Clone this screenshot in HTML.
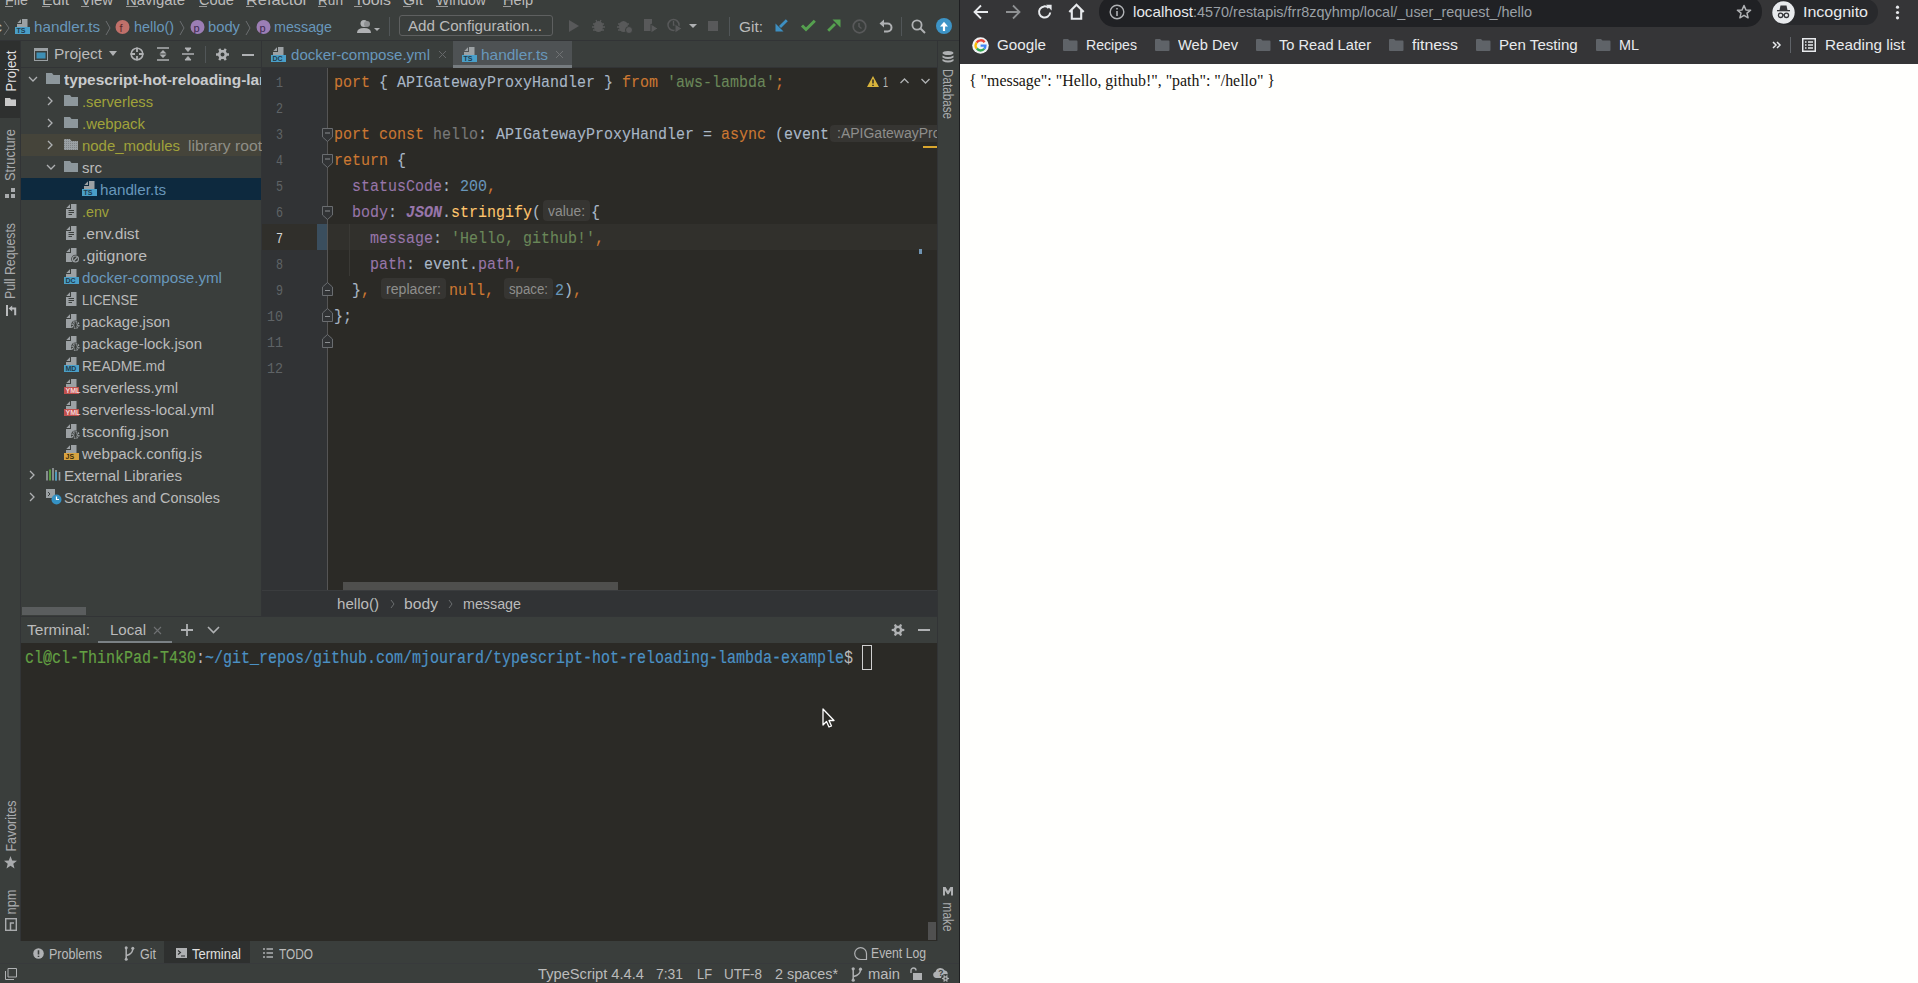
<!DOCTYPE html>
<html><head><meta charset="utf-8"><style>
html,body{margin:0;padding:0;width:1918px;height:983px;overflow:hidden;background:#3a3e3c;}
body>div,body>span,body>svg{position:absolute;}
svg{overflow:visible}
</style></head><body>
<div style="left:0px;top:0px;width:960px;height:983px;background:#3a3e3c;"></div>
<div style="left:0px;top:40px;width:959px;height:1px;background:#323436;"></div>
<span style="left:5px;top:-9px;font:normal normal 15px/17px 'Liberation Sans';color:#bbbbbb;white-space:pre;transform:scaleX(0.9516);transform-origin:0 0;">File</span>
<div style="left:5px;top:6px;width:8px;height:1px;background:#9a9a9a;"></div>
<span style="left:42px;top:-9px;font:normal normal 15px/17px 'Liberation Sans';color:#bbbbbb;white-space:pre;transform:scaleX(1.0446);transform-origin:0 0;">Edit</span>
<div style="left:42px;top:6px;width:8px;height:1px;background:#9a9a9a;"></div>
<span style="left:81px;top:-9px;font:normal normal 15px/17px 'Liberation Sans';color:#bbbbbb;white-space:pre;transform:scaleX(0.9925);transform-origin:0 0;">View</span>
<div style="left:81px;top:6px;width:8px;height:1px;background:#9a9a9a;"></div>
<span style="left:126px;top:-9px;font:normal normal 15px/17px 'Liberation Sans';color:#bbbbbb;white-space:pre;transform:scaleX(0.9966);transform-origin:0 0;">Navigate</span>
<div style="left:126px;top:6px;width:12px;height:1px;background:#9a9a9a;"></div>
<span style="left:199px;top:-9px;font:normal normal 15px/17px 'Liberation Sans';color:#bbbbbb;white-space:pre;transform:scaleX(0.9760);transform-origin:0 0;">Code</span>
<div style="left:199px;top:6px;width:8px;height:1px;background:#9a9a9a;"></div>
<span style="left:246px;top:-9px;font:normal normal 15px/17px 'Liberation Sans';color:#bbbbbb;white-space:pre;transform:scaleX(1.0937);transform-origin:0 0;">Refactor</span>
<div style="left:246px;top:6px;width:8px;height:1px;background:#9a9a9a;"></div>
<span style="left:318px;top:-9px;font:normal normal 15px/17px 'Liberation Sans';color:#bbbbbb;white-space:pre;transform:scaleX(0.9085);transform-origin:0 0;">Run</span>
<div style="left:318px;top:6px;width:8px;height:1px;background:#9a9a9a;"></div>
<span style="left:354px;top:-9px;font:normal normal 15px/17px 'Liberation Sans';color:#bbbbbb;white-space:pre;transform:scaleX(1.0566);transform-origin:0 0;">Tools</span>
<div style="left:354px;top:6px;width:8px;height:1px;background:#9a9a9a;"></div>
<span style="left:403px;top:-9px;font:normal normal 15px/17px 'Liberation Sans';color:#bbbbbb;white-space:pre;transform:scaleX(1.0434);transform-origin:0 0;">Git</span>
<div style="left:403px;top:6px;width:8px;height:1px;background:#9a9a9a;"></div>
<span style="left:436px;top:-9px;font:normal normal 15px/17px 'Liberation Sans';color:#bbbbbb;white-space:pre;transform:scaleX(0.9372);transform-origin:0 0;">Window</span>
<div style="left:436px;top:6px;width:12px;height:1px;background:#9a9a9a;"></div>
<span style="left:503px;top:-9px;font:normal normal 15px/17px 'Liberation Sans';color:#bbbbbb;white-space:pre;transform:scaleX(0.9725);transform-origin:0 0;">Help</span>
<div style="left:503px;top:6px;width:8px;height:1px;background:#9a9a9a;"></div>
<span style="left:-6px;top:18px;font:normal normal 15px/17px 'Liberation Sans';color:#bbbbbb;white-space:pre;transform:scaleX(1.0667);transform-origin:0 0;">c</span>
<svg style="left:0px;top:19px;" width="12" height="16" viewBox="0 0 12 16"><path d="M4 2 L9 9 L4 16" stroke="#6b6e70" stroke-width="1" fill="none"/></svg>
<svg style="left:15px;top:19px;" width="16" height="16" viewBox="0 0 16 16"><path d="M2.3 4 L6 0.3 V4 Z" fill="#9ca1a4"/><path d="M7 0 H12.5 V8 H2 V5 H7 Z" fill="#9ca1a4"/><rect x="0" y="8" width="15" height="7" fill="#4a9fc8"/><text x="1.5" y="14.2" font-family="Liberation Sans" font-size="7" font-weight="bold" fill="#1f3b4c">TS</text></svg>
<span style="left:34px;top:18px;font:normal normal 15px/17px 'Liberation Sans';color:#6897bb;white-space:pre;transform:scaleX(1.0147);transform-origin:0 0;">handler.ts</span>
<svg style="left:104px;top:19px;" width="8" height="16" viewBox="0 0 8 16"><path d="M2 2 L6 9 L2 16" stroke="#6b6e70" stroke-width="1" fill="none"/></svg>
<svg style="left:115px;top:19px;" width="16" height="16" viewBox="0 0 16 16"><circle cx="7.5" cy="8" r="7" fill="#c0706a"/><text x="4.5" y="13" font-family="Liberation Sans" font-size="11" fill="#5a2a2a">f</text></svg>
<span style="left:134px;top:18px;font:normal normal 15px/17px 'Liberation Sans';color:#6897bb;white-space:pre;transform:scaleX(0.9596);transform-origin:0 0;">hello()</span>
<svg style="left:178px;top:19px;" width="8" height="16" viewBox="0 0 8 16"><path d="M2 2 L6 9 L2 16" stroke="#6b6e70" stroke-width="1" fill="none"/></svg>
<svg style="left:190px;top:19px;" width="16" height="16" viewBox="0 0 16 16"><circle cx="7.5" cy="8" r="7" fill="#9c7eb5"/><text x="3.5" y="13" font-family="Liberation Sans" font-size="11" fill="#3d2a50">p</text></svg>
<span style="left:208px;top:18px;font:normal normal 15px/17px 'Liberation Sans';color:#6897bb;white-space:pre;transform:scaleX(0.9838);transform-origin:0 0;">body</span>
<svg style="left:244px;top:19px;" width="8" height="16" viewBox="0 0 8 16"><path d="M2 2 L6 9 L2 16" stroke="#6b6e70" stroke-width="1" fill="none"/></svg>
<svg style="left:256px;top:19px;" width="16" height="16" viewBox="0 0 16 16"><circle cx="7.5" cy="8" r="7" fill="#9c7eb5"/><text x="3.5" y="13" font-family="Liberation Sans" font-size="11" fill="#3d2a50">p</text></svg>
<span style="left:274px;top:18px;font:normal normal 15px/17px 'Liberation Sans';color:#6897bb;white-space:pre;transform:scaleX(0.9529);transform-origin:0 0;">message</span>
<svg style="left:356px;top:19px;" width="28" height="16" viewBox="0 0 28 16"><circle cx="8" cy="4.5" r="3.5" fill="#afb1b3"/><path d="M1 14 Q1 9 8 9 Q15 9 15 14 Z" fill="#afb1b3"/><circle cx="11" cy="5" r="3" fill="#8f9193"/><path d="M18 9 H24 L21 12 Z" fill="#afb1b3"/></svg>
<div style="left:389px;top:17px;width:1px;height:19px;background:#515658;"></div>
<div style="left:399px;top:15px;width:154px;height:21px;background:transparent;border:1px solid #5e6060;border-radius:3px;box-sizing:border-box"></div>
<span style="left:408px;top:17px;font:normal normal 15px/17px 'Liberation Sans';color:#bbbbbb;white-space:pre;transform:scaleX(1.0107);transform-origin:0 0;">Add Configuration...</span>
<svg style="left:568px;top:19px;" width="12" height="14" viewBox="0 0 12 14"><path d="M1 1 L11 7 L1 13 Z" fill="#58595a"/></svg>
<svg style="left:592px;top:18px;" width="13" height="15" viewBox="0 0 13 15"><ellipse cx="6.5" cy="8.5" rx="4.5" ry="5.5" fill="#58595a"/><path d="M1 6 H12 M0 9 H13 M1 12 H12 M4 2 L5 4 M9 2 L8 4" stroke="#58595a" stroke-width="1.3"/></svg>
<svg style="left:617px;top:18px;" width="16" height="15" viewBox="0 0 16 15"><ellipse cx="6.5" cy="8.5" rx="4.5" ry="5.5" fill="#58595a"/><path d="M1 6 H12 M0 9 H13 M1 12 H12" stroke="#58595a" stroke-width="1.3"/><circle cx="12" cy="12" r="3.5" fill="#58595a" stroke="#3a3e3c" stroke-width="1"/></svg>
<svg style="left:643px;top:18px;" width="16" height="15" viewBox="0 0 16 15"><path d="M1 1 H9 V13 H1 Z" fill="#58595a"/><path d="M8 6 L15 10.5 L8 15 Z" fill="#58595a" stroke="#3a3e3c" stroke-width="1"/></svg>
<svg style="left:667px;top:18px;" width="16" height="15" viewBox="0 0 16 15"><circle cx="6.5" cy="7" r="5.5" fill="none" stroke="#58595a" stroke-width="1.5"/><path d="M6.5 3 V7 H9" stroke="#58595a" stroke-width="1.3" fill="none"/><path d="M8 6 L15 10.5 L8 15 Z" fill="#58595a" stroke="#3a3e3c" stroke-width="1"/></svg>
<svg style="left:689px;top:24px;" width="9" height="5" viewBox="0 0 9 5"><path d="M0 0 H8 L4 4 Z" fill="#afb1b3"/></svg>
<svg style="left:708px;top:21px;" width="11" height="11" viewBox="0 0 11 11"><rect x="0" y="0" width="10" height="10" fill="#58595a"/></svg>
<div style="left:729px;top:17px;width:1px;height:19px;background:#515658;"></div>
<span style="left:739px;top:18px;font:normal normal 15px/17px 'Liberation Sans';color:#bbbbbb;white-space:pre;transform:scaleX(1.0285);transform-origin:0 0;">Git:</span>
<svg style="left:775px;top:19px;" width="13" height="13" viewBox="0 0 13 13"><path d="M11.8 1.2 L5 8" stroke="#3d8fc2" stroke-width="2.8"/><path d="M0.5 12.5 V4.5 L8.5 12.5 Z" fill="#3d8fc2"/></svg>
<svg style="left:801px;top:19px;" width="15" height="13" viewBox="0 0 15 13"><path d="M1 6.5 L5 10.5 L13.8 1.7" stroke="#55a04f" stroke-width="3" fill="none"/></svg>
<svg style="left:827px;top:19px;" width="14" height="13" viewBox="0 0 14 13"><path d="M1.2 11.8 L8 5" stroke="#55a04f" stroke-width="2.8"/><path d="M13.5 0.5 V8.5 L5.5 0.5 Z" fill="#55a04f"/></svg>
<svg style="left:852px;top:19px;" width="15" height="15" viewBox="0 0 15 15"><circle cx="7.5" cy="7.5" r="6.3" fill="none" stroke="#58595a" stroke-width="1.7"/><path d="M7 4 L7 7.5 L9.5 9.5" stroke="#58595a" stroke-width="1.5" fill="none"/></svg>
<svg style="left:879px;top:19px;" width="14" height="14" viewBox="0 0 14 14"><path d="M4 4.5 H8.5 A4 4 0 0 1 8.5 12.5 H5" stroke="#afb1b3" stroke-width="2" fill="none"/><path d="M0.5 4.5 L5 0.5 V8.5 Z" fill="#afb1b3"/></svg>
<div style="left:901px;top:17px;width:1px;height:19px;background:#515658;"></div>
<svg style="left:911px;top:19px;" width="15" height="15" viewBox="0 0 15 15"><circle cx="6" cy="6" r="4.6" fill="none" stroke="#afb1b3" stroke-width="1.8"/><path d="M9.5 9.5 L14 14" stroke="#afb1b3" stroke-width="2"/></svg>
<svg style="left:936px;top:18px;" width="17" height="17" viewBox="0 0 17 17"><circle cx="8" cy="8" r="8" fill="#3d94c6"/><path d="M8 13 V7" stroke="#ffffff" stroke-width="2.2"/><path d="M4 8.5 L8 3.8 L12 8.5 Z" fill="#ffffff"/></svg>
<div style="left:0px;top:41px;width:20px;height:900px;background:#3a3e3c;"></div>
<div style="left:20px;top:41px;width:1px;height:900px;background:#323436;"></div>
<div style="left:0px;top:41px;width:20px;height:77px;background:#2e302f;"></div>
<span style="left:-11.29px;top:62.50px;line-height:16px;font:normal 14px/16px 'Liberation Sans';color:#dedede;white-space:pre;transform:rotate(-90deg) scaleX(0.9410);transform-origin:50% 50%;">Project</span>
<svg style="left:5px;top:97px;" width="12" height="10" viewBox="0 0 12 10"><path d="M0 1 H5 L6 2.5 H11 V9 H0 Z" fill="#c9c9c9"/></svg>
<span style="left:-17.90px;top:147.00px;line-height:16px;font:normal 14px/16px 'Liberation Sans';color:#a9abad;white-space:pre;transform:rotate(-90deg) scaleX(0.9155);transform-origin:50% 50%;">Structure</span>
<svg style="left:5px;top:188px;" width="12" height="10" viewBox="0 0 12 10"><rect x="0" y="6" width="4" height="4" fill="#a9abad"/><rect x="6" y="6" width="4" height="4" fill="#a9abad"/><rect x="6" y="0" width="4" height="4" fill="#a9abad"/></svg>
<span style="left:-32.69px;top:253.00px;line-height:16px;font:normal 14px/16px 'Liberation Sans';color:#a9abad;white-space:pre;transform:rotate(-90deg) scaleX(0.8798);transform-origin:50% 50%;">Pull Requests</span>
<svg style="left:5px;top:304px;" width="12" height="13" viewBox="0 0 12 13"><rect x="1" y="1" width="2" height="11" fill="#b9bbbd"/><path d="M3.6 4.6 L7.2 1.6 V7.6 Z" fill="#b9bbbd"/><path d="M6.5 4.6 H10.2 V11.2" stroke="#b9bbbd" stroke-width="2" fill="none"/></svg>
<span style="left:-18.29px;top:817.50px;line-height:16px;font:normal 14px/16px 'Liberation Sans';color:#a9abad;white-space:pre;transform:rotate(-90deg) scaleX(0.8858);transform-origin:50% 50%;">Favorites</span>
<svg style="left:4px;top:856px;" width="13" height="13" viewBox="0 0 13 13"><path d="M6.5 0 L8.2 4.5 L13 4.8 L9.3 7.8 L10.5 12.5 L6.5 9.8 L2.5 12.5 L3.7 7.8 L0 4.8 L4.8 4.5 Z" fill="#a9abad"/></svg>
<span style="left:-3.12px;top:893.50px;line-height:16px;font:normal 14px/16px 'Liberation Sans';color:#a9abad;white-space:pre;transform:rotate(-90deg) scaleX(0.9180);transform-origin:50% 50%;">npm</span>
<svg style="left:5px;top:918px;" width="12" height="13" viewBox="0 0 12 13"><rect x="0.7" y="0.7" width="10.6" height="11.6" fill="none" stroke="#a9abad" stroke-width="1.4"/><path d="M5.5 12 V5 H9" stroke="#a9abad" stroke-width="1.5" fill="none"/></svg>
<div style="left:21px;top:41px;width:240px;height:576px;background:#3a3e3c;"></div>
<div style="left:21px;top:67px;width:240px;height:1px;background:#323436;"></div>
<div style="left:261px;top:41px;width:1px;height:576px;background:#323436;"></div>
<svg style="left:34px;top:48px;" width="15" height="14" viewBox="0 0 15 14"><rect x="0.5" y="0.5" width="13" height="12" fill="none" stroke="#9aa0a3" stroke-width="1"/><rect x="0.5" y="0.5" width="13" height="2.5" fill="#9aa0a3"/><rect x="2.5" y="4.5" width="9" height="6" fill="#3d8fb5"/></svg>
<span style="left:54px;top:45px;font:normal normal 15px/17px 'Liberation Sans';color:#bbbbbb;white-space:pre;transform:scaleX(1.0282);transform-origin:0 0;">Project</span>
<svg style="left:109px;top:51px;" width="9" height="6" viewBox="0 0 9 6"><path d="M0 0 H8 L4 5 Z" fill="#afb1b3"/></svg>
<svg style="left:130px;top:47px;" width="15" height="15" viewBox="0 0 15 15"><circle cx="7" cy="7" r="5.8" fill="none" stroke="#afb1b3" stroke-width="1.6"/><path d="M7 0.5 V5 M7 9 V13.5 M0.5 7 H5 M9 7 H13.5" stroke="#afb1b3" stroke-width="1.8"/></svg>
<svg style="left:157px;top:47px;" width="13" height="14" viewBox="0 0 13 14"><path d="M0 1 H12 M0 13 H12" stroke="#afb1b3" stroke-width="1.6"/><path d="M2.5 6.4 L6 3 L9.5 6.4 Z M2.5 7.6 L6 11 L9.5 7.6 Z" fill="#afb1b3"/></svg>
<svg style="left:182px;top:47px;" width="13" height="14" viewBox="0 0 13 14"><path d="M0 7 H12" stroke="#afb1b3" stroke-width="1.5"/><path d="M3 1 L6 4.5 L9 1 Z M3 13 L6 9.5 L9 13 Z" fill="#afb1b3" stroke="#afb1b3" stroke-width="1"/></svg>
<div style="left:205px;top:46px;width:1px;height:17px;background:#515658;"></div>
<svg style="left:216px;top:48px;" width="13" height="13" viewBox="0 0 13 13"><path d="M10.91 5.19 L13.00 5.37 L13.00 7.63 L10.91 7.81 L9.84 9.67 L10.73 11.56 L8.77 12.70 L7.57 10.97 L5.43 10.97 L4.23 12.70 L2.27 11.56 L3.16 9.67 L2.09 7.81 L-0.00 7.63 L-0.00 5.37 L2.09 5.19 L3.16 3.33 L2.27 1.44 L4.23 0.30 L5.43 2.03 L7.57 2.03 L8.77 0.30 L10.73 1.44 L9.84 3.33 Z M8.50 6.50 A2.0 2.0 0 1 0 4.50 6.50 A2.0 2.0 0 1 0 8.50 6.50 Z" fill="#afb1b3" fill-rule="evenodd"/></svg>
<div style="left:242px;top:54px;width:12px;height:2px;background:#afb1b3;"></div>
<div style="left:21px;top:134px;width:240px;height:22px;background:#45443a;"></div>
<div style="left:21px;top:178px;width:240px;height:22px;background:#0d293e;"></div>
<svg style="left:28px;top:76px;" width="10" height="7" viewBox="0 0 10 7"><path d="M1 1 L5 5 L9 1" stroke="#afb1b3" stroke-width="1.3" fill="none"/></svg>
<svg style="left:46px;top:73px;" width="15" height="11" viewBox="0 0 15 11"><path d="M0 0 H6 L7.5 2 H14 V11 H0 Z" fill="#8d979c"/></svg>
<span style="left:64px;top:71px;font:normal bold 15px/17px 'Liberation Sans';color:#c9cbcd;white-space:pre;transform:scaleX(1.0269);transform-origin:0 0;">typescript-hot-reloading-lambda-example</span>
<div style="left:261px;top:68px;width:1px;height:22px;background:#323436;"></div>
<svg style="left:47px;top:96px;" width="7" height="10" viewBox="0 0 7 10"><path d="M1 1 L5 5 L1 9" stroke="#afb1b3" stroke-width="1.3" fill="none"/></svg>
<svg style="left:64px;top:95px;" width="15" height="11" viewBox="0 0 15 11"><path d="M0 0 H6 L7.5 2 H14 V11 H0 Z" fill="#8d979c"/></svg>
<span style="left:82px;top:93px;font:normal normal 15px/17px 'Liberation Sans';color:#a0a23a;white-space:pre;transform:scaleX(0.9791);transform-origin:0 0;">.serverless</span>
<svg style="left:47px;top:118px;" width="7" height="10" viewBox="0 0 7 10"><path d="M1 1 L5 5 L1 9" stroke="#afb1b3" stroke-width="1.3" fill="none"/></svg>
<svg style="left:64px;top:117px;" width="15" height="11" viewBox="0 0 15 11"><path d="M0 0 H6 L7.5 2 H14 V11 H0 Z" fill="#8d979c"/></svg>
<span style="left:82px;top:115px;font:normal normal 15px/17px 'Liberation Sans';color:#a0a23a;white-space:pre;transform:scaleX(0.9942);transform-origin:0 0;">.webpack</span>
<svg style="left:47px;top:140px;" width="7" height="10" viewBox="0 0 7 10"><path d="M1 1 L5 5 L1 9" stroke="#afb1b3" stroke-width="1.3" fill="none"/></svg>
<svg style="left:64px;top:139px;" width="15" height="11" viewBox="0 0 15 11"><defs><pattern id="hp" width="2" height="2" patternUnits="userSpaceOnUse"><rect width="2" height="2" fill="#9aa0a3"/><rect width="1" height="1" fill="#7f8385"/></pattern></defs><path d="M0 0 H6 L7.5 2 H14 V11 H0 Z" fill="url(#hp)"/></svg>
<span style="left:82px;top:137px;font:normal normal 15px/17px 'Liberation Sans';color:#a0a23a;white-space:pre;transform:scaleX(0.9959);transform-origin:0 0;">node_modules</span>
<span style="left:188px;top:137px;font:normal normal 15px/17px 'Liberation Sans';color:#8e8e86;white-space:pre;transform:scaleX(1.0444);transform-origin:0 0;">library root</span>
<svg style="left:46px;top:164px;" width="10" height="7" viewBox="0 0 10 7"><path d="M1 1 L5 5 L9 1" stroke="#afb1b3" stroke-width="1.3" fill="none"/></svg>
<svg style="left:64px;top:161px;" width="15" height="11" viewBox="0 0 15 11"><path d="M0 0 H6 L7.5 2 H14 V11 H0 Z" fill="#8d979c"/></svg>
<span style="left:82px;top:159px;font:normal normal 15px/17px 'Liberation Sans';color:#bbbbbb;white-space:pre;transform:scaleX(1.0002);transform-origin:0 0;">src</span>
<svg style="left:82px;top:181px;" width="16" height="16" viewBox="0 0 16 16"><path d="M2.3 4 L6 0.3 V4 Z" fill="#9ca1a4"/><path d="M7 0 H12.5 V8 H2 V5 H7 Z" fill="#9ca1a4"/><rect x="0" y="8" width="15" height="7" fill="#4a9fc8"/><text x="1.5" y="14.2" font-family="Liberation Sans" font-size="7" font-weight="bold" fill="#1f3b4c">TS</text></svg>
<span style="left:100px;top:181px;font:normal normal 15px/17px 'Liberation Sans';color:#6897bb;white-space:pre;transform:scaleX(1.0147);transform-origin:0 0;">handler.ts</span>
<svg style="left:66px;top:204px;" width="16" height="16" viewBox="0 0 16 16"><path d="M0.3 4 L4 0.3 V4 Z" fill="#9ca1a4"/><path d="M5 0 H10.5 V14 H0 V5 H5 Z" fill="#9ca1a4"/><path d="M2.5 6.5 H8 M2.5 8.5 H8 M2.5 10.5 H6" stroke="#3a3e3c" stroke-width="1"/></svg>
<span style="left:82px;top:203px;font:normal normal 15px/17px 'Liberation Sans';color:#a0a23a;white-space:pre;transform:scaleX(0.9523);transform-origin:0 0;">.env</span>
<svg style="left:66px;top:226px;" width="16" height="16" viewBox="0 0 16 16"><path d="M0.3 4 L4 0.3 V4 Z" fill="#9ca1a4"/><path d="M5 0 H10.5 V14 H0 V5 H5 Z" fill="#9ca1a4"/><path d="M2.5 6.5 H8 M2.5 8.5 H8 M2.5 10.5 H6" stroke="#3a3e3c" stroke-width="1"/></svg>
<span style="left:82px;top:225px;font:normal normal 15px/17px 'Liberation Sans';color:#bbbbbb;white-space:pre;transform:scaleX(1.0411);transform-origin:0 0;">.env.dist</span>
<svg style="left:66px;top:248px;" width="16" height="16" viewBox="0 0 16 16"><path d="M0.3 4 L4 0.3 V4 Z" fill="#9ca1a4"/><path d="M5 0 H10.5 V14 H0 V5 H5 Z" fill="#9ca1a4"/><circle cx="9.5" cy="11" r="4.3" fill="#3a3e3c"/><circle cx="9.5" cy="11" r="3" fill="none" stroke="#9ca1a4" stroke-width="1.1"/><path d="M7.5 13 L11.5 9" stroke="#9ca1a4" stroke-width="1.1"/></svg>
<span style="left:82px;top:247px;font:normal normal 15px/17px 'Liberation Sans';color:#bbbbbb;white-space:pre;transform:scaleX(1.0534);transform-origin:0 0;">.gitignore</span>
<svg style="left:64px;top:269px;" width="16" height="16" viewBox="0 0 16 16"><path d="M2.3 4 L6 0.3 V4 Z" fill="#9ca1a4"/><path d="M7 0 H12.5 V8 H2 V5 H7 Z" fill="#9ca1a4"/><rect x="0" y="8" width="15" height="7" fill="#4a9fc8"/><text x="1.5" y="14.2" font-family="Liberation Sans" font-size="7" font-weight="bold" fill="#1f3b4c">DC</text></svg>
<span style="left:82px;top:269px;font:normal normal 15px/17px 'Liberation Sans';color:#6897bb;white-space:pre;transform:scaleX(1.0117);transform-origin:0 0;">docker-compose.yml</span>
<svg style="left:66px;top:292px;" width="16" height="16" viewBox="0 0 16 16"><path d="M0.3 4 L4 0.3 V4 Z" fill="#9ca1a4"/><path d="M5 0 H10.5 V14 H0 V5 H5 Z" fill="#9ca1a4"/><path d="M2.5 6.5 H8 M2.5 8.5 H8 M2.5 10.5 H6" stroke="#3a3e3c" stroke-width="1"/></svg>
<span style="left:82px;top:291px;font:normal normal 15px/17px 'Liberation Sans';color:#bbbbbb;white-space:pre;transform:scaleX(0.8724);transform-origin:0 0;">LICENSE</span>
<svg style="left:66px;top:314px;" width="16" height="16" viewBox="0 0 16 16"><path d="M0.3 4 L4 0.3 V4 Z" fill="#9ca1a4"/><path d="M5 0 H10.5 V14 H0 V5 H5 Z" fill="#9ca1a4"/><circle cx="9.5" cy="11" r="4.5" fill="#3a3e3c"/><circle cx="9.5" cy="11" r="3.4" fill="none" stroke="#9ca1a4" stroke-width="1.3" stroke-dasharray="1.6 1"/><path d="M8.7 9 Q7.8 9 7.8 10 V11 L7.2 11 L7.8 11 V12 Q7.8 13 8.7 13 M10.3 9 Q11.2 9 11.2 10 V11 L11.8 11 L11.2 11 V12 Q11.2 13 10.3 13" stroke="#9ca1a4" stroke-width="0.8" fill="none"/></svg>
<span style="left:82px;top:313px;font:normal normal 15px/17px 'Liberation Sans';color:#bbbbbb;white-space:pre;transform:scaleX(0.9955);transform-origin:0 0;">package.json</span>
<svg style="left:66px;top:336px;" width="16" height="16" viewBox="0 0 16 16"><path d="M0.3 4 L4 0.3 V4 Z" fill="#9ca1a4"/><path d="M5 0 H10.5 V14 H0 V5 H5 Z" fill="#9ca1a4"/><circle cx="9.5" cy="11" r="4.5" fill="#3a3e3c"/><circle cx="9.5" cy="11" r="3.4" fill="none" stroke="#9ca1a4" stroke-width="1.3" stroke-dasharray="1.6 1"/><path d="M8.7 9 Q7.8 9 7.8 10 V11 L7.2 11 L7.8 11 V12 Q7.8 13 8.7 13 M10.3 9 Q11.2 9 11.2 10 V11 L11.8 11 L11.2 11 V12 Q11.2 13 10.3 13" stroke="#9ca1a4" stroke-width="0.8" fill="none"/></svg>
<span style="left:82px;top:335px;font:normal normal 15px/17px 'Liberation Sans';color:#bbbbbb;white-space:pre;transform:scaleX(0.9995);transform-origin:0 0;">package-lock.json</span>
<svg style="left:64px;top:357px;" width="16" height="16" viewBox="0 0 16 16"><path d="M2.3 4 L6 0.3 V4 Z" fill="#9ca1a4"/><path d="M7 0 H12.5 V8 H2 V5 H7 Z" fill="#9ca1a4"/><rect x="0" y="8" width="15" height="7" fill="#4a9fc8"/><text x="1.5" y="14.2" font-family="Liberation Sans" font-size="7" font-weight="bold" fill="#1f3b4c">MD</text></svg>
<span style="left:82px;top:357px;font:normal normal 15px/17px 'Liberation Sans';color:#bbbbbb;white-space:pre;transform:scaleX(0.9307);transform-origin:0 0;">README.md</span>
<svg style="left:64px;top:379px;" width="16" height="16" viewBox="0 0 16 16"><path d="M2.3 4 L6 0.3 V4 Z" fill="#9ca1a4"/><path d="M7 0 H12.5 V8 H2 V5 H7 Z" fill="#9ca1a4"/><rect x="0" y="8" width="15" height="7" fill="#c0504d"/><text x="1.5" y="14.2" font-family="Liberation Sans" font-size="7" font-weight="bold" fill="#f5d5d5">YML</text></svg>
<span style="left:82px;top:379px;font:normal normal 15px/17px 'Liberation Sans';color:#bbbbbb;white-space:pre;transform:scaleX(1.0016);transform-origin:0 0;">serverless.yml</span>
<svg style="left:64px;top:401px;" width="16" height="16" viewBox="0 0 16 16"><path d="M2.3 4 L6 0.3 V4 Z" fill="#9ca1a4"/><path d="M7 0 H12.5 V8 H2 V5 H7 Z" fill="#9ca1a4"/><rect x="0" y="8" width="15" height="7" fill="#c0504d"/><text x="1.5" y="14.2" font-family="Liberation Sans" font-size="7" font-weight="bold" fill="#f5d5d5">YML</text></svg>
<span style="left:82px;top:401px;font:normal normal 15px/17px 'Liberation Sans';color:#bbbbbb;white-space:pre;transform:scaleX(1.0024);transform-origin:0 0;">serverless-local.yml</span>
<svg style="left:66px;top:424px;" width="16" height="16" viewBox="0 0 16 16"><path d="M0.3 4 L4 0.3 V4 Z" fill="#9ca1a4"/><path d="M5 0 H10.5 V14 H0 V5 H5 Z" fill="#9ca1a4"/><circle cx="9.5" cy="11" r="4.5" fill="#3a3e3c"/><circle cx="9.5" cy="11" r="3.4" fill="none" stroke="#9ca1a4" stroke-width="1.3" stroke-dasharray="1.6 1"/><path d="M8.7 9 Q7.8 9 7.8 10 V11 L7.2 11 L7.8 11 V12 Q7.8 13 8.7 13 M10.3 9 Q11.2 9 11.2 10 V11 L11.8 11 L11.2 11 V12 Q11.2 13 10.3 13" stroke="#9ca1a4" stroke-width="0.8" fill="none"/></svg>
<span style="left:82px;top:423px;font:normal normal 15px/17px 'Liberation Sans';color:#bbbbbb;white-space:pre;transform:scaleX(1.0434);transform-origin:0 0;">tsconfig.json</span>
<svg style="left:64px;top:445px;" width="16" height="16" viewBox="0 0 16 16"><path d="M2.3 4 L6 0.3 V4 Z" fill="#9ca1a4"/><path d="M7 0 H12.5 V8 H2 V5 H7 Z" fill="#9ca1a4"/><rect x="0" y="8" width="15" height="7" fill="#d8a23f"/><text x="1.5" y="14.2" font-family="Liberation Sans" font-size="7" font-weight="bold" fill="#3a2a0a">JS</text></svg>
<span style="left:82px;top:445px;font:normal normal 15px/17px 'Liberation Sans';color:#bbbbbb;white-space:pre;transform:scaleX(1.0135);transform-origin:0 0;">webpack.config.js</span>
<svg style="left:29px;top:470px;" width="7" height="10" viewBox="0 0 7 10"><path d="M1 1 L5 5 L1 9" stroke="#afb1b3" stroke-width="1.3" fill="none"/></svg>
<svg style="left:46px;top:468px;" width="15" height="13" viewBox="0 0 15 13"><path d="M1 3 V12.5 M10 2 V12.5 M13.5 4 V12.5" stroke="#9aa0a3" stroke-width="1.6"/><path d="M4 1.5 V12.5" stroke="#62b543" stroke-width="1.6"/><path d="M7 0 V12.5" stroke="#9aa0a3" stroke-width="1.6"/><path d="M10 4 V12.5" stroke="#40a0c8" stroke-width="1.6"/></svg>
<span style="left:64px;top:467px;font:normal normal 15px/17px 'Liberation Sans';color:#bbbbbb;white-space:pre;transform:scaleX(1.0110);transform-origin:0 0;">External Libraries</span>
<svg style="left:29px;top:492px;" width="7" height="10" viewBox="0 0 7 10"><path d="M1 1 L5 5 L1 9" stroke="#afb1b3" stroke-width="1.3" fill="none"/></svg>
<svg style="left:46px;top:489px;" width="16" height="16" viewBox="0 0 16 16"><path d="M0 0 H9 V9 H0 Z" fill="#9aa0a3"/><path d="M2 3 L4 5 L2 7" stroke="#3a3e3c" stroke-width="1" fill="none"/><circle cx="10.5" cy="10.5" r="5" fill="#3592c4"/><path d="M10.5 7.5 V10.5 H13" stroke="#ffffff" stroke-width="1.2" fill="none"/></svg>
<span style="left:64px;top:489px;font:normal normal 15px/17px 'Liberation Sans';color:#bbbbbb;white-space:pre;transform:scaleX(0.9595);transform-origin:0 0;">Scratches and Consoles</span>
<div style="left:22px;top:607px;width:64px;height:8px;background:#5a5d5e;"></div>
<div style="left:262px;top:41px;width:675px;height:26px;background:#3a3e3c;"></div>
<div style="left:262px;top:67px;width:675px;height:1px;background:#323436;"></div>
<svg style="left:271px;top:47px;" width="16" height="16" viewBox="0 0 16 16"><path d="M2.3 4 L6 0.3 V4 Z" fill="#9ca1a4"/><path d="M7 0 H12.5 V8 H2 V5 H7 Z" fill="#9ca1a4"/><rect x="0" y="8" width="15" height="7" fill="#4a9fc8"/><text x="1.5" y="14.2" font-family="Liberation Sans" font-size="7" font-weight="bold" fill="#1f3b4c">DC</text></svg>
<span style="left:291px;top:46px;font:normal normal 15px/17px 'Liberation Sans';color:#6897bb;white-space:pre;transform:scaleX(1.0045);transform-origin:0 0;">docker-compose.yml</span>
<svg style="left:438px;top:50px;" width="9" height="9" viewBox="0 0 9 9"><path d="M1 1 L8 8 M8 1 L1 8" stroke="#66686a" stroke-width="1"/></svg>
<div style="left:453px;top:41px;width:119px;height:27px;background:#4e5254;"></div>
<div style="left:453px;top:65px;width:119px;height:3px;background:#767c80;"></div>
<svg style="left:462px;top:47px;" width="16" height="16" viewBox="0 0 16 16"><path d="M2.3 4 L6 0.3 V4 Z" fill="#9ca1a4"/><path d="M7 0 H12.5 V8 H2 V5 H7 Z" fill="#9ca1a4"/><rect x="0" y="8" width="15" height="7" fill="#4a9fc8"/><text x="1.5" y="14.2" font-family="Liberation Sans" font-size="7" font-weight="bold" fill="#1f3b4c">TS</text></svg>
<span style="left:481px;top:46px;font:normal normal 15px/17px 'Liberation Sans';color:#6897bb;white-space:pre;transform:scaleX(1.0300);transform-origin:0 0;">handler.ts</span>
<svg style="left:555px;top:50px;" width="9" height="9" viewBox="0 0 9 9"><path d="M1 1 L8 8 M8 1 L1 8" stroke="#707274" stroke-width="1"/></svg>
<div style="left:262px;top:68px;width:675px;height:523px;background:#2b2a26;"></div>
<div style="left:262px;top:68px;width:65px;height:523px;background:#313335;"></div>
<div style="left:327px;top:68px;width:1px;height:523px;background:#555555;"></div>
<div style="left:262px;top:224px;width:65px;height:26px;background:#302f2b;"></div>
<div style="left:328px;top:224px;width:609px;height:26px;background:#31302c;"></div>
<div style="left:317px;top:224px;width:10px;height:26px;background:#3a4e5e;"></div>
<span style="left:276px;top:75px;font:normal normal 14px/16px 'Liberation Mono';color:#5f6366;white-space:pre;transform:scaleX(0.8332);transform-origin:0 0;">1</span>
<span style="left:276px;top:101px;font:normal normal 14px/16px 'Liberation Mono';color:#5f6366;white-space:pre;transform:scaleX(0.8332);transform-origin:0 0;">2</span>
<span style="left:276px;top:127px;font:normal normal 14px/16px 'Liberation Mono';color:#5f6366;white-space:pre;transform:scaleX(0.8332);transform-origin:0 0;">3</span>
<span style="left:276px;top:153px;font:normal normal 14px/16px 'Liberation Mono';color:#5f6366;white-space:pre;transform:scaleX(0.8332);transform-origin:0 0;">4</span>
<span style="left:276px;top:179px;font:normal normal 14px/16px 'Liberation Mono';color:#5f6366;white-space:pre;transform:scaleX(0.8332);transform-origin:0 0;">5</span>
<span style="left:276px;top:205px;font:normal normal 14px/16px 'Liberation Mono';color:#5f6366;white-space:pre;transform:scaleX(0.8332);transform-origin:0 0;">6</span>
<span style="left:276px;top:231px;font:normal normal 14px/16px 'Liberation Mono';color:#d8d8d8;white-space:pre;transform:scaleX(0.8332);transform-origin:0 0;">7</span>
<span style="left:276px;top:257px;font:normal normal 14px/16px 'Liberation Mono';color:#5f6366;white-space:pre;transform:scaleX(0.8332);transform-origin:0 0;">8</span>
<span style="left:276px;top:283px;font:normal normal 14px/16px 'Liberation Mono';color:#5f6366;white-space:pre;transform:scaleX(0.8332);transform-origin:0 0;">9</span>
<span style="left:267px;top:309px;font:normal normal 14px/16px 'Liberation Mono';color:#5f6366;white-space:pre;transform:scaleX(0.9522);transform-origin:0 0;">10</span>
<span style="left:267px;top:335px;font:normal normal 14px/16px 'Liberation Mono';color:#5f6366;white-space:pre;transform:scaleX(0.9522);transform-origin:0 0;">11</span>
<span style="left:267px;top:361px;font:normal normal 14px/16px 'Liberation Mono';color:#5f6366;white-space:pre;transform:scaleX(0.9522);transform-origin:0 0;">12</span>
<span style="left:334px;top:73px;font:normal normal 17px/19px 'Liberation Mono';color:#cc7832;white-space:pre;transform:scaleX(0.8822);transform-origin:0 0;-webkit-text-stroke:0.1px #cc7832">port</span>
<span style="left:370.0px;top:73px;font:normal normal 17px/19px 'Liberation Mono';color:#a9b7c6;white-space:pre;transform:scaleX(0.8822);transform-origin:0 0;-webkit-text-stroke:0.1px #a9b7c6"> { APIGatewayProxyHandler } </span>
<span style="left:622.0px;top:73px;font:normal normal 17px/19px 'Liberation Mono';color:#cc7832;white-space:pre;transform:scaleX(0.8822);transform-origin:0 0;-webkit-text-stroke:0.1px #cc7832">from</span>
<span style="left:658.0px;top:73px;font:normal normal 17px/19px 'Liberation Mono';color:#a9b7c6;white-space:pre;transform:scaleX(0.8822);transform-origin:0 0;-webkit-text-stroke:0.1px #a9b7c6"> </span>
<span style="left:667.0px;top:73px;font:normal normal 17px/19px 'Liberation Mono';color:#6a8759;white-space:pre;transform:scaleX(0.8822);transform-origin:0 0;-webkit-text-stroke:0.1px #6a8759">'aws-lambda'</span>
<span style="left:775.0px;top:73px;font:normal normal 17px/19px 'Liberation Mono';color:#cc7832;white-space:pre;transform:scaleX(0.8822);transform-origin:0 0;-webkit-text-stroke:0.1px #cc7832">;</span>
<span style="left:334px;top:125px;font:normal normal 17px/19px 'Liberation Mono';color:#cc7832;white-space:pre;transform:scaleX(0.8822);transform-origin:0 0;-webkit-text-stroke:0.1px #cc7832">port const </span>
<span style="left:433.0px;top:125px;font:normal normal 17px/19px 'Liberation Mono';color:#787878;white-space:pre;transform:scaleX(0.8822);transform-origin:0 0;-webkit-text-stroke:0.1px #787878">hello</span>
<span style="left:478.0px;top:125px;font:normal normal 17px/19px 'Liberation Mono';color:#a9b7c6;white-space:pre;transform:scaleX(0.8822);transform-origin:0 0;-webkit-text-stroke:0.1px #a9b7c6">: APIGatewayProxyHandler = </span>
<span style="left:721.0px;top:125px;font:normal normal 17px/19px 'Liberation Mono';color:#cc7832;white-space:pre;transform:scaleX(0.8822);transform-origin:0 0;-webkit-text-stroke:0.1px #cc7832">async</span>
<span style="left:766.0px;top:125px;font:normal normal 17px/19px 'Liberation Mono';color:#a9b7c6;white-space:pre;transform:scaleX(0.8822);transform-origin:0 0;-webkit-text-stroke:0.1px #a9b7c6"> (event</span>
<span style="left:334px;top:151px;font:normal normal 17px/19px 'Liberation Mono';color:#cc7832;white-space:pre;transform:scaleX(0.8822);transform-origin:0 0;-webkit-text-stroke:0.1px #cc7832">return</span>
<span style="left:388.0px;top:151px;font:normal normal 17px/19px 'Liberation Mono';color:#a9b7c6;white-space:pre;transform:scaleX(0.8822);transform-origin:0 0;-webkit-text-stroke:0.1px #a9b7c6"> {</span>
<span style="left:334px;top:177px;font:normal normal 17px/19px 'Liberation Mono';color:#a9b7c6;white-space:pre;transform:scaleX(0.8822);transform-origin:0 0;-webkit-text-stroke:0.1px #a9b7c6">  </span>
<span style="left:352.0px;top:177px;font:normal normal 17px/19px 'Liberation Mono';color:#9876aa;white-space:pre;transform:scaleX(0.8822);transform-origin:0 0;-webkit-text-stroke:0.1px #9876aa">statusCode</span>
<span style="left:442.0px;top:177px;font:normal normal 17px/19px 'Liberation Mono';color:#a9b7c6;white-space:pre;transform:scaleX(0.8822);transform-origin:0 0;-webkit-text-stroke:0.1px #a9b7c6">: </span>
<span style="left:460.0px;top:177px;font:normal normal 17px/19px 'Liberation Mono';color:#6897bb;white-space:pre;transform:scaleX(0.8822);transform-origin:0 0;-webkit-text-stroke:0.1px #6897bb">200</span>
<span style="left:487.0px;top:177px;font:normal normal 17px/19px 'Liberation Mono';color:#cc7832;white-space:pre;transform:scaleX(0.8822);transform-origin:0 0;-webkit-text-stroke:0.1px #cc7832">,</span>
<span style="left:334px;top:203px;font:normal normal 17px/19px 'Liberation Mono';color:#a9b7c6;white-space:pre;transform:scaleX(0.8822);transform-origin:0 0;-webkit-text-stroke:0.1px #a9b7c6">  </span>
<span style="left:352.0px;top:203px;font:normal normal 17px/19px 'Liberation Mono';color:#9876aa;white-space:pre;transform:scaleX(0.8822);transform-origin:0 0;-webkit-text-stroke:0.1px #9876aa">body</span>
<span style="left:388.0px;top:203px;font:normal normal 17px/19px 'Liberation Mono';color:#a9b7c6;white-space:pre;transform:scaleX(0.8822);transform-origin:0 0;-webkit-text-stroke:0.1px #a9b7c6">: </span>
<span style="left:406.0px;top:203px;font:italic bold 17px/19px 'Liberation Mono';color:#9876aa;white-space:pre;transform:scaleX(0.8822);transform-origin:0 0;-webkit-text-stroke:0.1px #9876aa">JSON</span>
<span style="left:442.0px;top:203px;font:normal normal 17px/19px 'Liberation Mono';color:#a9b7c6;white-space:pre;transform:scaleX(0.8822);transform-origin:0 0;-webkit-text-stroke:0.1px #a9b7c6">.</span>
<span style="left:451.0px;top:203px;font:normal normal 17px/19px 'Liberation Mono';color:#ffc66d;white-space:pre;transform:scaleX(0.8822);transform-origin:0 0;-webkit-text-stroke:0.1px #ffc66d">stringify</span>
<span style="left:532.0px;top:203px;font:normal normal 17px/19px 'Liberation Mono';color:#a9b7c6;white-space:pre;transform:scaleX(0.8822);transform-origin:0 0;-webkit-text-stroke:0.1px #a9b7c6">(</span>
<div style="left:543px;top:200px;width:47px;height:21px;background:#363532;border-radius:4px"></div>
<span style="left:548px;top:203px;font:normal normal 14px/16px 'Liberation Sans';color:#8e8e8c;white-space:pre;transform:scaleX(0.9904);transform-origin:0 0;">value:</span>
<span style="left:591px;top:203px;font:normal normal 17px/19px 'Liberation Mono';color:#a9b7c6;white-space:pre;transform:scaleX(0.8822);transform-origin:0 0;-webkit-text-stroke:0.1px #a9b7c6">{</span>
<span style="left:334px;top:229px;font:normal normal 17px/19px 'Liberation Mono';color:#a9b7c6;white-space:pre;transform:scaleX(0.8822);transform-origin:0 0;-webkit-text-stroke:0.1px #a9b7c6">    </span>
<span style="left:370.0px;top:229px;font:normal normal 17px/19px 'Liberation Mono';color:#9876aa;white-space:pre;transform:scaleX(0.8822);transform-origin:0 0;-webkit-text-stroke:0.1px #9876aa">message</span>
<span style="left:433.0px;top:229px;font:normal normal 17px/19px 'Liberation Mono';color:#a9b7c6;white-space:pre;transform:scaleX(0.8822);transform-origin:0 0;-webkit-text-stroke:0.1px #a9b7c6">: </span>
<span style="left:451.0px;top:229px;font:normal normal 17px/19px 'Liberation Mono';color:#6a8759;white-space:pre;transform:scaleX(0.8822);transform-origin:0 0;-webkit-text-stroke:0.1px #6a8759">'Hello, github!'</span>
<span style="left:595.0px;top:229px;font:normal normal 17px/19px 'Liberation Mono';color:#cc7832;white-space:pre;transform:scaleX(0.8822);transform-origin:0 0;-webkit-text-stroke:0.1px #cc7832">,</span>
<span style="left:334px;top:255px;font:normal normal 17px/19px 'Liberation Mono';color:#a9b7c6;white-space:pre;transform:scaleX(0.8822);transform-origin:0 0;-webkit-text-stroke:0.1px #a9b7c6">    </span>
<span style="left:370.0px;top:255px;font:normal normal 17px/19px 'Liberation Mono';color:#9876aa;white-space:pre;transform:scaleX(0.8822);transform-origin:0 0;-webkit-text-stroke:0.1px #9876aa">path</span>
<span style="left:406.0px;top:255px;font:normal normal 17px/19px 'Liberation Mono';color:#a9b7c6;white-space:pre;transform:scaleX(0.8822);transform-origin:0 0;-webkit-text-stroke:0.1px #a9b7c6">: </span>
<span style="left:424.0px;top:255px;font:normal normal 17px/19px 'Liberation Mono';color:#a9b7c6;white-space:pre;transform:scaleX(0.8822);transform-origin:0 0;-webkit-text-stroke:0.1px #a9b7c6">event</span>
<span style="left:469.0px;top:255px;font:normal normal 17px/19px 'Liberation Mono';color:#a9b7c6;white-space:pre;transform:scaleX(0.8822);transform-origin:0 0;-webkit-text-stroke:0.1px #a9b7c6">.</span>
<span style="left:478.0px;top:255px;font:normal normal 17px/19px 'Liberation Mono';color:#9876aa;white-space:pre;transform:scaleX(0.8822);transform-origin:0 0;-webkit-text-stroke:0.1px #9876aa">path</span>
<span style="left:514.0px;top:255px;font:normal normal 17px/19px 'Liberation Mono';color:#cc7832;white-space:pre;transform:scaleX(0.8822);transform-origin:0 0;-webkit-text-stroke:0.1px #cc7832">,</span>
<span style="left:334px;top:281px;font:normal normal 17px/19px 'Liberation Mono';color:#a9b7c6;white-space:pre;transform:scaleX(0.8822);transform-origin:0 0;-webkit-text-stroke:0.1px #a9b7c6">  </span>
<span style="left:352.0px;top:281px;font:normal normal 17px/19px 'Liberation Mono';color:#a9b7c6;white-space:pre;transform:scaleX(0.8822);transform-origin:0 0;-webkit-text-stroke:0.1px #a9b7c6">}</span>
<span style="left:361.0px;top:281px;font:normal normal 17px/19px 'Liberation Mono';color:#cc7832;white-space:pre;transform:scaleX(0.8822);transform-origin:0 0;-webkit-text-stroke:0.1px #cc7832">,</span>
<div style="left:381px;top:278px;width:65px;height:21px;background:#363532;border-radius:4px"></div>
<span style="left:386px;top:281px;font:normal normal 14px/16px 'Liberation Sans';color:#8e8e8c;white-space:pre;transform:scaleX(1.0098);transform-origin:0 0;">replacer:</span>
<span style="left:448.6px;top:281px;font:normal normal 17px/19px 'Liberation Mono';color:#cc7832;white-space:pre;transform:scaleX(0.8822);transform-origin:0 0;-webkit-text-stroke:0.1px #cc7832">null</span>
<span style="left:484.6px;top:281px;font:normal normal 17px/19px 'Liberation Mono';color:#cc7832;white-space:pre;transform:scaleX(0.8822);transform-origin:0 0;-webkit-text-stroke:0.1px #cc7832">,</span>
<div style="left:504px;top:278px;width:49px;height:21px;background:#363532;border-radius:4px"></div>
<span style="left:509px;top:281px;font:normal normal 14px/16px 'Liberation Sans';color:#8e8e8c;white-space:pre;transform:scaleX(0.9455);transform-origin:0 0;">space:</span>
<span style="left:555px;top:281px;font:normal normal 17px/19px 'Liberation Mono';color:#6897bb;white-space:pre;transform:scaleX(0.8822);transform-origin:0 0;-webkit-text-stroke:0.1px #6897bb">2</span>
<span style="left:564.0px;top:281px;font:normal normal 17px/19px 'Liberation Mono';color:#a9b7c6;white-space:pre;transform:scaleX(0.8822);transform-origin:0 0;-webkit-text-stroke:0.1px #a9b7c6">)</span>
<span style="left:573.0px;top:281px;font:normal normal 17px/19px 'Liberation Mono';color:#cc7832;white-space:pre;transform:scaleX(0.8822);transform-origin:0 0;-webkit-text-stroke:0.1px #cc7832">,</span>
<span style="left:334px;top:307px;font:normal normal 17px/19px 'Liberation Mono';color:#a9b7c6;white-space:pre;transform:scaleX(0.8822);transform-origin:0 0;-webkit-text-stroke:0.1px #a9b7c6">};</span>
<div style="left:830px;top:125px;width:107px;height:17px;background:#363532;border-radius:4px 0 0 4px"></div>
<span style="left:837px;top:125px;font:normal normal 14px/16px 'Liberation Sans';color:#8e8e8c;white-space:pre;clip-path:inset(0 calc(100% - 100px) 0 0)">:APIGatewayProxyHandler</span>
<div style="left:923px;top:146px;width:14px;height:2px;background:#d9a62e;"></div>
<div style="left:919px;top:249px;width:3px;height:5px;background:#6f93b2;"></div>
<svg style="left:322px;top:128px;" width="12" height="16" viewBox="0 0 12 16"><path d="M0.5 0.5 H10.5 V9 L5.5 13.5 L0.5 9 Z" fill="#313335" stroke="#6a6d70" stroke-width="1"/><path d="M3 5 H8" stroke="#8a8d90" stroke-width="1"/></svg>
<svg style="left:322px;top:154px;" width="12" height="16" viewBox="0 0 12 16"><path d="M0.5 0.5 H10.5 V9 L5.5 13.5 L0.5 9 Z" fill="#313335" stroke="#6a6d70" stroke-width="1"/><path d="M3 5 H8" stroke="#8a8d90" stroke-width="1"/></svg>
<svg style="left:322px;top:206px;" width="12" height="16" viewBox="0 0 12 16"><path d="M0.5 0.5 H10.5 V9 L5.5 13.5 L0.5 9 Z" fill="#313335" stroke="#6a6d70" stroke-width="1"/><path d="M3 5 H8" stroke="#8a8d90" stroke-width="1"/></svg>
<svg style="left:322px;top:282px;" width="12" height="16" viewBox="0 0 12 16"><path d="M0.5 13.5 H10.5 V5 L5.5 0.5 L0.5 5 Z" fill="#313335" stroke="#6a6d70" stroke-width="1"/><path d="M3 8.5 H8" stroke="#8a8d90" stroke-width="1"/></svg>
<svg style="left:322px;top:308px;" width="12" height="16" viewBox="0 0 12 16"><path d="M0.5 13.5 H10.5 V5 L5.5 0.5 L0.5 5 Z" fill="#313335" stroke="#6a6d70" stroke-width="1"/><path d="M3 8.5 H8" stroke="#8a8d90" stroke-width="1"/></svg>
<svg style="left:322px;top:334px;" width="12" height="16" viewBox="0 0 12 16"><path d="M0.5 13.5 H10.5 V5 L5.5 0.5 L0.5 5 Z" fill="#313335" stroke="#6a6d70" stroke-width="1"/><path d="M3 8.5 H8" stroke="#8a8d90" stroke-width="1"/></svg>
<svg style="left:867px;top:76px;" width="12" height="11" viewBox="0 0 12 11"><path d="M6 0 L12 11 H0 Z" fill="#d9b43c"/><path d="M6 3.5 V7.5 M6 8.8 V10" stroke="#2b2a26" stroke-width="1.5"/></svg>
<span style="left:883px;top:74px;font:normal normal 14px/16px 'Liberation Sans';color:#bbbbbb;white-space:pre;transform:scaleX(0.6422);transform-origin:0 0;">1</span>
<svg style="left:900px;top:78px;" width="9" height="6" viewBox="0 0 9 6"><path d="M0.5 5 L4.5 1 L8.5 5" stroke="#afb1b3" stroke-width="1.3" fill="none"/></svg>
<svg style="left:921px;top:78px;" width="9" height="6" viewBox="0 0 9 6"><path d="M0.5 1 L4.5 5 L8.5 1" stroke="#afb1b3" stroke-width="1.3" fill="none"/></svg>
<div style="left:349px;top:224px;width:1px;height:52px;background:#3a3935;"></div>
<div style="left:343px;top:582px;width:275px;height:8px;background:#4f4f4d;"></div>
<div style="left:262px;top:591px;width:675px;height:25px;background:#313335;"></div>
<div style="left:262px;top:590px;width:675px;height:1px;background:#3a3c3e;"></div>
<span style="left:337px;top:595px;font:normal normal 15px/17px 'Liberation Sans';color:#bbbbbb;white-space:pre;transform:scaleX(1.0076);transform-origin:0 0;">hello()</span>
<svg style="left:390px;top:599px;" width="6" height="10" viewBox="0 0 6 10"><path d="M1 1 L4 5 L1 9" stroke="#6b6e70" stroke-width="1" fill="none"/></svg>
<span style="left:404px;top:595px;font:normal normal 15px/17px 'Liberation Sans';color:#bbbbbb;white-space:pre;transform:scaleX(1.0453);transform-origin:0 0;">body</span>
<svg style="left:448px;top:599px;" width="6" height="10" viewBox="0 0 6 10"><path d="M1 1 L4 5 L1 9" stroke="#6b6e70" stroke-width="1" fill="none"/></svg>
<span style="left:463px;top:595px;font:normal normal 15px/17px 'Liberation Sans';color:#bbbbbb;white-space:pre;transform:scaleX(0.9529);transform-origin:0 0;">message</span>
<div style="left:21px;top:616px;width:916px;height:1px;background:#323436;"></div>
<div style="left:21px;top:617px;width:916px;height:26px;background:#3a3e3c;"></div>
<span style="left:27px;top:621px;font:normal normal 15px/17px 'Liberation Sans';color:#bbbbbb;white-space:pre;transform:scaleX(1.0353);transform-origin:0 0;">Terminal:</span>
<span style="left:110px;top:621px;font:normal normal 15px/17px 'Liberation Sans';color:#bbbbbb;white-space:pre;transform:scaleX(1.0039);transform-origin:0 0;">Local</span>
<svg style="left:153px;top:626px;" width="9" height="9" viewBox="0 0 9 9"><path d="M1 1 L8 8 M8 1 L1 8" stroke="#6f7173" stroke-width="1.1"/></svg>
<div style="left:98px;top:641px;width:74px;height:3px;background:#7b8185;"></div>
<svg style="left:181px;top:624px;" width="12" height="12" viewBox="0 0 12 12"><path d="M6 0 V12 M0 6 H12" stroke="#afb1b3" stroke-width="1.8"/></svg>
<svg style="left:207px;top:626px;" width="13" height="8" viewBox="0 0 13 8"><path d="M1 1 L6.5 6.5 L12 1" stroke="#afb1b3" stroke-width="1.6" fill="none"/></svg>
<svg style="left:891px;top:623px;" width="14" height="14" viewBox="0 0 14 14"><path d="M11.22 5.75 L13.30 5.90 L13.30 8.10 L11.22 8.25 L10.19 10.03 L11.11 11.91 L9.20 13.01 L8.03 11.28 L5.97 11.28 L4.80 13.01 L2.89 11.91 L3.81 10.03 L2.78 8.25 L0.70 8.10 L0.70 5.90 L2.78 5.75 L3.81 3.97 L2.89 2.09 L4.80 0.99 L5.97 2.72 L8.03 2.72 L9.20 0.99 L11.11 2.09 L10.19 3.97 Z M8.90 7.00 A1.9 1.9 0 1 0 5.10 7.00 A1.9 1.9 0 1 0 8.90 7.00 Z" fill="#afb1b3" fill-rule="evenodd"/></svg>
<div style="left:918px;top:629px;width:12px;height:2px;background:#afb1b3;"></div>
<div style="left:21px;top:643px;width:916px;height:298px;background:#2b2a26;"></div>
<span style="left:25px;top:648px;font:normal normal 18px/20px 'Liberation Mono';color:#63a043;white-space:pre;transform:scaleX(0.8332);transform-origin:0 0;-webkit-text-stroke:0.2px #63a043">cl@cl-ThinkPad-T430</span>
<span style="left:196px;top:648px;font:normal normal 18px/20px 'Liberation Mono';color:#bbbbbb;white-space:pre;transform:scaleX(0.8332);transform-origin:0 0;">:</span>
<span style="left:205px;top:648px;font:normal normal 18px/20px 'Liberation Mono';color:#4b91c4;white-space:pre;transform:scaleX(0.8332);transform-origin:0 0;-webkit-text-stroke:0.2px #4b91c4">~/git_repos/github.com/mjourard/typescript-hot-reloading-lambda-example</span>
<span style="left:844px;top:648px;font:normal normal 18px/20px 'Liberation Mono';color:#bbbbbb;white-space:pre;transform:scaleX(0.8332);transform-origin:0 0;">$</span>
<div style="left:862px;top:645px;width:10px;height:25px;background:transparent;border:1px solid #d0d0d0;box-sizing:border-box"></div>
<div style="left:928px;top:922px;width:8px;height:18px;background:#505050;"></div>
<svg style="left:822px;top:708px;" width="14" height="21" viewBox="0 0 14 21"><path d="M1 1 L1 17 L4.5 13.5 L7 19 L9.5 18 L7 12.5 L12 12.5 Z" fill="#2b2a26" stroke="#ffffff" stroke-width="1.3" stroke-linejoin="round"/></svg>
<div style="left:937px;top:41px;width:22px;height:900px;background:#3a3e3c;"></div>
<div style="left:937px;top:41px;width:1px;height:900px;background:#323436;"></div>
<svg style="left:942px;top:51px;" width="12" height="12" viewBox="0 0 12 12"><ellipse cx="6" cy="2" rx="5.5" ry="2" fill="#afb1b3"/><path d="M0.5 4.5 Q6 7.5 11.5 4.5 V6.5 Q6 9.5 0.5 6.5 Z M0.5 8 Q6 11 11.5 8 V10 Q6 13 0.5 10 Z" fill="#afb1b3"/></svg>
<span style="left:918.03px;top:86.00px;line-height:16px;font:normal 14px/16px 'Liberation Sans';color:#a9abad;white-space:pre;transform:rotate(90deg) scaleX(0.8343);transform-origin:50% 50%;">Database</span>
<svg style="left:943px;top:887px;" width="11" height="9" viewBox="0 0 11 9"><path d="M0 8.5 V0 H2.6 L5 4 L7.4 0 H10 V8.5 H8 V3.6 L5.6 7.2 H4.4 L2 3.6 V8.5 Z" fill="#afb1b3"/></svg>
<span style="left:930.88px;top:908.50px;line-height:16px;font:normal 14px/16px 'Liberation Sans';color:#a9abad;white-space:pre;transform:rotate(90deg) scaleX(0.8471);transform-origin:50% 50%;">make</span>
<div style="left:959px;top:0px;width:1px;height:983px;background:#1e1f21;"></div>
<div style="left:0px;top:941px;width:959px;height:22px;background:#3a3e3c;"></div>
<div style="left:0px;top:941px;width:0px;height:0px;background:#323436;"></div>
<div style="left:164px;top:941px;width:86px;height:22px;background:#2e302f;"></div>
<svg style="left:33px;top:948px;" width="11" height="11" viewBox="0 0 11 11"><circle cx="5.5" cy="5.5" r="5.3" fill="#afb1b3"/><path d="M5.5 2.3 V6.5 M5.5 7.8 V9" stroke="#3a3e3c" stroke-width="1.6"/></svg>
<span style="left:49px;top:946px;font:normal normal 14px/16px 'Liberation Sans';color:#bbbbbb;white-space:pre;transform:scaleX(0.8963);transform-origin:0 0;">Problems</span>
<svg style="left:124px;top:946px;" width="11" height="15" viewBox="0 0 11 15"><path d="M2.2 2 V13 M8.8 2.5 Q8.8 8 2.5 9.5" stroke="#afb1b3" stroke-width="1.5" fill="none"/><circle cx="2.2" cy="1.8" r="1.5" fill="#afb1b3"/><circle cx="8.8" cy="2.2" r="1.5" fill="#afb1b3"/><circle cx="2.2" cy="13.2" r="1.5" fill="#afb1b3"/></svg>
<span style="left:140px;top:946px;font:normal normal 14px/16px 'Liberation Sans';color:#bbbbbb;white-space:pre;transform:scaleX(0.8944);transform-origin:0 0;">Git</span>
<svg style="left:176px;top:948px;" width="11" height="10" viewBox="0 0 11 10"><rect x="0" y="0" width="11" height="10" fill="#afb1b3"/><path d="M2 2.5 L4.5 4.5 L2 6.5 M5 8 H9" stroke="#2d2f30" stroke-width="1.1" fill="none"/></svg>
<span style="left:192px;top:946px;font:normal normal 14px/16px 'Liberation Sans';color:#e0e0e0;white-space:pre;transform:scaleX(0.9262);transform-origin:0 0;">Terminal</span>
<svg style="left:263px;top:948px;" width="10" height="10" viewBox="0 0 10 10"><path d="M0 1 H2 M0 5 H2 M0 9 H2 M3.5 1 H10 M3.5 5 H10 M3.5 9 H10" stroke="#afb1b3" stroke-width="1.6"/></svg>
<span style="left:279px;top:946px;font:normal normal 14px/16px 'Liberation Sans';color:#bbbbbb;white-space:pre;transform:scaleX(0.8460);transform-origin:0 0;">TODO</span>
<svg style="left:854px;top:947px;" width="14" height="14" viewBox="0 0 14 14"><path d="M6.6 0.7 A5.9 5.9 0 0 1 12.5 6.6 V12.5 H6.6 A5.9 5.9 0 0 1 6.6 0.7 Z" fill="none" stroke="#afb1b3" stroke-width="1.2"/></svg>
<span style="left:871px;top:945px;font:normal normal 14px/16px 'Liberation Sans';color:#bbbbbb;white-space:pre;transform:scaleX(0.8724);transform-origin:0 0;">Event Log</span>
<div style="left:0px;top:963px;width:959px;height:1px;background:#383a3c;"></div>
<div style="left:0px;top:964px;width:959px;height:19px;background:#3a3e3c;"></div>
<svg style="left:5px;top:968px;" width="12" height="12" viewBox="0 0 12 12"><path d="M3 0.5 H11.5 V9 H3 Z" fill="none" stroke="#afb1b3" stroke-width="1"/><path d="M0.5 3 V11.5 H9" stroke="#afb1b3" stroke-width="1" fill="none"/></svg>
<span style="left:538px;top:966px;font:normal normal 14px/16px 'Liberation Sans';color:#bbbbbb;white-space:pre;transform:scaleX(1.0478);transform-origin:0 0;">TypeScript 4.4.4</span>
<span style="left:656px;top:966px;font:normal normal 14px/16px 'Liberation Sans';color:#bbbbbb;white-space:pre;transform:scaleX(0.9909);transform-origin:0 0;">7:31</span>
<span style="left:697px;top:966px;font:normal normal 14px/16px 'Liberation Sans';color:#bbbbbb;white-space:pre;transform:scaleX(0.9181);transform-origin:0 0;">LF</span>
<span style="left:724px;top:966px;font:normal normal 14px/16px 'Liberation Sans';color:#bbbbbb;white-space:pre;transform:scaleX(0.9581);transform-origin:0 0;">UTF-8</span>
<span style="left:775px;top:966px;font:normal normal 14px/16px 'Liberation Sans';color:#bbbbbb;white-space:pre;transform:scaleX(1.0247);transform-origin:0 0;">2 spaces*</span>
<svg style="left:851px;top:967px;" width="12" height="15" viewBox="0 0 12 15"><path d="M2.2 2 V13 M9.5 2.5 Q9.5 8 2.5 9.5" stroke="#afb1b3" stroke-width="1.5" fill="none"/><circle cx="2.2" cy="1.8" r="1.6" fill="#afb1b3"/><circle cx="9.5" cy="2.2" r="1.6" fill="#afb1b3"/><circle cx="2.2" cy="13.2" r="1.6" fill="#afb1b3"/></svg>
<span style="left:868px;top:966px;font:normal normal 14px/16px 'Liberation Sans';color:#bbbbbb;white-space:pre;transform:scaleX(1.0545);transform-origin:0 0;">main</span>
<svg style="left:910px;top:967px;" width="12" height="13" viewBox="0 0 12 13"><rect x="3" y="6" width="9" height="7" fill="#afb1b3"/><path d="M1 6 V3.5 A2.5 2.5 0 0 1 6 3.5" stroke="#afb1b3" stroke-width="1.4" fill="none"/></svg>
<svg style="left:933px;top:966px;" width="17" height="17" viewBox="0 0 17 17"><path d="M3.2 12 A3.2 3.2 0 0 1 2.6 5.7 A5 5 0 0 1 11.8 4.6 A3.6 3.6 0 0 1 14.5 9 L12 12 Z" fill="#afb1b3"/><text x="5.3" y="9.8" font-family="Liberation Sans" font-weight="bold" font-size="8.5" fill="#3a3e3c">?</text><circle cx="12.5" cy="12.5" r="4.5" fill="#3a3e3c"/><path d="M14.80 11.82 L16.05 11.88 L16.05 13.12 L14.80 13.18 L14.24 14.15 L14.81 15.26 L13.74 15.88 L13.06 14.83 L11.94 14.83 L11.26 15.88 L10.19 15.26 L10.76 14.15 L10.20 13.18 L8.95 13.12 L8.95 11.88 L10.20 11.82 L10.76 10.85 L10.19 9.74 L11.26 9.12 L11.94 10.17 L13.06 10.17 L13.74 9.12 L14.81 9.74 L14.24 10.85 Z M13.50 12.50 A1.0 1.0 0 1 0 11.50 12.50 A1.0 1.0 0 1 0 13.50 12.50 Z" fill="#afb1b3" fill-rule="evenodd"/></svg>
<div style="left:960px;top:0px;width:958px;height:64px;background:#353537;"></div>
<div style="left:960px;top:64px;width:958px;height:919px;background:#fffffd;"></div>
<svg style="left:973px;top:4px;" width="16" height="16" viewBox="0 0 16 16"><path d="M15 8 H2 M8 1.5 L1.5 8 L8 14.5" stroke="#e8eaed" stroke-width="1.8" fill="none"/></svg>
<svg style="left:1005px;top:4px;" width="16" height="16" viewBox="0 0 16 16"><path d="M1 8 H14 M8 1.5 L14.5 8 L8 14.5" stroke="#8f9193" stroke-width="1.8" fill="none"/></svg>
<svg style="left:1037px;top:4px;" width="16" height="16" viewBox="0 0 16 16"><path d="M13.2 8.5 A5.6 5.6 0 1 1 11.6 4" stroke="#e8eaed" stroke-width="2" fill="none"/><path d="M9 0.8 H14.6 V6.4 Z" fill="#e8eaed"/></svg>
<svg style="left:1068px;top:3px;" width="17" height="17" viewBox="0 0 17 17"><path d="M1.3 9 L8.5 1.8 L15.7 9 M3.8 7 V15.8 H13.2 V7" stroke="#e8eaed" stroke-width="2.1" fill="none"/></svg>
<div style="left:1099px;top:-4px;width:663px;height:31px;background:#202124;border-radius:15px"></div>
<svg style="left:1109px;top:4px;" width="16" height="16" viewBox="0 0 16 16"><circle cx="8" cy="8" r="6.8" fill="none" stroke="#b0b2b5" stroke-width="1.4"/><path d="M8 7 V12 M8 4 V5.6" stroke="#b0b2b5" stroke-width="1.6"/></svg>
<span style="left:1133px;top:3px;font:normal normal 15px/17px 'Liberation Sans';color:#e8eaed;white-space:pre;transform:scaleX(1.0135);transform-origin:0 0;">localhost</span>
<span style="left:1193px;top:3px;font:normal normal 15px/17px 'Liberation Sans';color:#9aa0a6;white-space:pre;transform:scaleX(0.9612);transform-origin:0 0;">:4570/restapis/frr8zqyhmp/local/_user_request_/hello</span>
<svg style="left:1736px;top:4px;" width="16" height="16" viewBox="0 0 16 16"><path d="M8 1.5 L9.9 5.9 L14.6 6.2 L11 9.2 L12.1 13.8 L8 11.3 L3.9 13.8 L5 9.2 L1.4 6.2 L6.1 5.9 Z" fill="none" stroke="#b0b2b5" stroke-width="1.5" stroke-linejoin="round"/></svg>
<div style="left:1772px;top:-1px;width:106px;height:26px;background:#28292c;border-radius:13px"></div>
<svg style="left:1772px;top:1px;" width="23" height="23" viewBox="0 0 23 23"><circle cx="11.5" cy="11.5" r="11.2" fill="#e8eaed"/><path d="M7.5 9 L8.5 4.5 H14.5 L15.5 9 Z" fill="#35363a"/><rect x="5" y="9" width="13" height="1.3" fill="#35363a"/><circle cx="8.6" cy="14.3" r="2.2" fill="none" stroke="#35363a" stroke-width="1.3"/><circle cx="14.4" cy="14.3" r="2.2" fill="none" stroke="#35363a" stroke-width="1.3"/><path d="M10.8 14 H12.2" stroke="#35363a" stroke-width="1.2"/></svg>
<span style="left:1803px;top:3px;font:normal normal 15px/17px 'Liberation Sans';color:#e8eaed;white-space:pre;transform:scaleX(1.0677);transform-origin:0 0;">Incognito</span>
<svg style="left:1895px;top:5px;" width="5" height="15" viewBox="0 0 5 15"><circle cx="2.5" cy="2.2" r="1.6" fill="#e8eaed"/><circle cx="2.5" cy="7.5" r="1.6" fill="#e8eaed"/><circle cx="2.5" cy="12.8" r="1.6" fill="#e8eaed"/></svg>
<svg style="left:972px;top:37px;" width="17" height="17" viewBox="0 0 17 17"><circle cx="8.5" cy="8.5" r="8.3" fill="#f1f3f4"/><path d="M12.6 5.2 A4.9 4.9 0 0 0 4.6 5.6" stroke="#ea4335" stroke-width="2.4" fill="none"/><path d="M4.6 5.6 A4.9 4.9 0 0 0 4.8 11.6" stroke="#fbbc05" stroke-width="2.4" fill="none"/><path d="M4.8 11.6 A4.9 4.9 0 0 0 12.3 11.8" stroke="#34a853" stroke-width="2.4" fill="none"/><path d="M12.3 11.8 A4.9 4.9 0 0 0 13.4 8.6 H8.6" stroke="#4285f4" stroke-width="2.4" fill="none"/></svg>
<span style="left:997px;top:36px;font:normal normal 15px/17px 'Liberation Sans';color:#e8eaed;white-space:pre;transform:scaleX(1.0130);transform-origin:0 0;">Google</span>
<svg style="left:1063px;top:39px;" width="15" height="12" viewBox="0 0 15 12"><path d="M0 1 Q0 0 1 0 H5 L6.5 1.5 H13.5 Q14.5 1.5 14.5 2.5 V11 Q14.5 12 13.5 12 H1 Q0 12 0 11 Z" fill="#5f6368"/></svg>
<span style="left:1086px;top:36px;font:normal normal 15px/17px 'Liberation Sans';color:#e8eaed;white-space:pre;transform:scaleX(0.9411);transform-origin:0 0;">Recipes</span>
<svg style="left:1155px;top:39px;" width="15" height="12" viewBox="0 0 15 12"><path d="M0 1 Q0 0 1 0 H5 L6.5 1.5 H13.5 Q14.5 1.5 14.5 2.5 V11 Q14.5 12 13.5 12 H1 Q0 12 0 11 Z" fill="#5f6368"/></svg>
<span style="left:1178px;top:36px;font:normal normal 15px/17px 'Liberation Sans';color:#e8eaed;white-space:pre;transform:scaleX(0.9770);transform-origin:0 0;">Web Dev</span>
<svg style="left:1256px;top:39px;" width="15" height="12" viewBox="0 0 15 12"><path d="M0 1 Q0 0 1 0 H5 L6.5 1.5 H13.5 Q14.5 1.5 14.5 2.5 V11 Q14.5 12 13.5 12 H1 Q0 12 0 11 Z" fill="#5f6368"/></svg>
<span style="left:1279px;top:36px;font:normal normal 15px/17px 'Liberation Sans';color:#e8eaed;white-space:pre;transform:scaleX(0.9764);transform-origin:0 0;">To Read Later</span>
<svg style="left:1389px;top:39px;" width="15" height="12" viewBox="0 0 15 12"><path d="M0 1 Q0 0 1 0 H5 L6.5 1.5 H13.5 Q14.5 1.5 14.5 2.5 V11 Q14.5 12 13.5 12 H1 Q0 12 0 11 Z" fill="#5f6368"/></svg>
<span style="left:1412px;top:36px;font:normal normal 15px/17px 'Liberation Sans';color:#e8eaed;white-space:pre;transform:scaleX(1.0611);transform-origin:0 0;">fitness</span>
<svg style="left:1476px;top:39px;" width="15" height="12" viewBox="0 0 15 12"><path d="M0 1 Q0 0 1 0 H5 L6.5 1.5 H13.5 Q14.5 1.5 14.5 2.5 V11 Q14.5 12 13.5 12 H1 Q0 12 0 11 Z" fill="#5f6368"/></svg>
<span style="left:1499px;top:36px;font:normal normal 15px/17px 'Liberation Sans';color:#e8eaed;white-space:pre;transform:scaleX(1.0079);transform-origin:0 0;">Pen Testing</span>
<svg style="left:1596px;top:39px;" width="15" height="12" viewBox="0 0 15 12"><path d="M0 1 Q0 0 1 0 H5 L6.5 1.5 H13.5 Q14.5 1.5 14.5 2.5 V11 Q14.5 12 13.5 12 H1 Q0 12 0 11 Z" fill="#5f6368"/></svg>
<span style="left:1619px;top:36px;font:normal normal 15px/17px 'Liberation Sans';color:#e8eaed;white-space:pre;transform:scaleX(0.9598);transform-origin:0 0;">ML</span>
<svg style="left:1772px;top:41px;" width="9" height="8" viewBox="0 0 9 8"><path d="M1 1 L4 4 L1 7 M5 1 L8 4 L5 7" stroke="#e8eaed" stroke-width="1.5" fill="none"/></svg>
<div style="left:1790px;top:37px;width:1px;height:16px;background:#5f6368;"></div>
<svg style="left:1802px;top:38px;" width="14" height="14" viewBox="0 0 14 14"><rect x="0.75" y="0.75" width="12.5" height="12.5" fill="none" stroke="#e8eaed" stroke-width="1.5"/><path d="M3 4 H4.5 M6 4 H11 M3 7 H4.5 M6 7 H11 M3 10 H4.5 M6 10 H11" stroke="#e8eaed" stroke-width="1.4"/></svg>
<span style="left:1825px;top:36px;font:normal normal 15px/17px 'Liberation Sans';color:#e8eaed;white-space:pre;transform:scaleX(1.0207);transform-origin:0 0;">Reading list</span>
<span style="left:969px;top:72px;font:normal normal 16px/17px 'Liberation Serif';color:#17140f;white-space:pre;transform:scaleX(0.9920);transform-origin:0 0;">{ "message": "Hello, github!", "path": "/hello" }</span>
</body></html>
